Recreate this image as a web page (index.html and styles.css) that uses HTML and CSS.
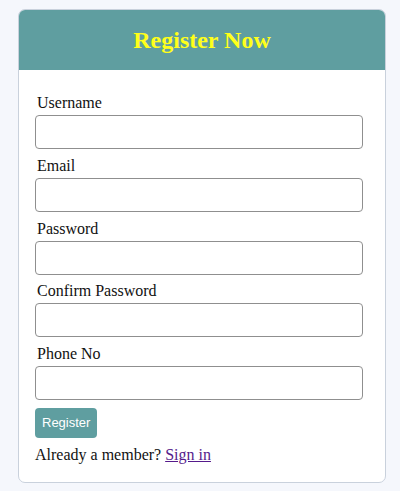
FILE: index.html
```html
<!DOCTYPE html>
<html lang="en">
<head>
  <meta charset="UTF-8" />
  <title>Register</title>
  <link rel="stylesheet" href="styles.css">
</head>
<body>
  <div class="card">
    <div class="card-header">
      <h2>Register Now</h2>
    </div>
    <form class="card-body">
      <div class="field">
        <label for="username">Username</label>
        <input type="text" id="username" />
      </div>
      <div class="field">
        <label for="email">Email</label>
        <input type="email" id="email" />
      </div>
      <div class="field">
        <label for="password">Password</label>
        <input type="password" id="password" />
      </div>
      <div class="field">
        <label for="confirm">Confirm Password</label>
        <input type="password" id="confirm" />
      </div>
      <div class="field">
        <label for="phone">Phone No</label>
        <input type="text" id="phone" />
      </div>
      <button type="submit" class="register-btn">Register</button>
      <p class="signin">Already a member? <a href="#">Sign in</a></p>
    </form>
  </div>
</body>
</html>
```

FILE: styles.css
```css
body {
  margin: 0;
  padding: 9px 0 0 18px;
  background-color: #f5f7fc;
  font-family: "Liberation Serif", "Times New Roman", serif;
  font-size: 16px;
  color: #111;
}

.card {
  width: 366px;
  background: #fff;
  border: 1px solid #c9d1dc;
  border-radius: 7px;
  overflow: hidden;
}

.card-header {
  background-color: cadetblue;
  height: 60px;
  display: flex;
  align-items: center;
  justify-content: center;
}

.card-header h2 {
  margin: 0;
  color: #ffff1a;
  font-size: 24px;
  font-weight: bold;
}

.card-body {
  padding: 24px 16px 18px 16px;
}

.field {
  margin-bottom: 7.8px;
}

.field label {
  display: block;
  margin: 0 0 3px 2px;
}

.field input {
  box-sizing: border-box;
  width: 328px;
  height: 34px;
  border: 1px solid #8f8f8f;
  border-radius: 4px;
  padding: 4px 8px;
  font-size: 16px;
}

.register-btn {
  background-color: cadetblue;
  color: #fff;
  border: none;
  border-radius: 4px;
  padding: 0 7px;
  height: 30px;
  font-family: "Liberation Sans", Arial, sans-serif;
  font-size: 13px;
  cursor: pointer;
}

.signin {
  margin: 8px 0 0 0;
}

.signin a {
  color: #551a8b;
}
```
